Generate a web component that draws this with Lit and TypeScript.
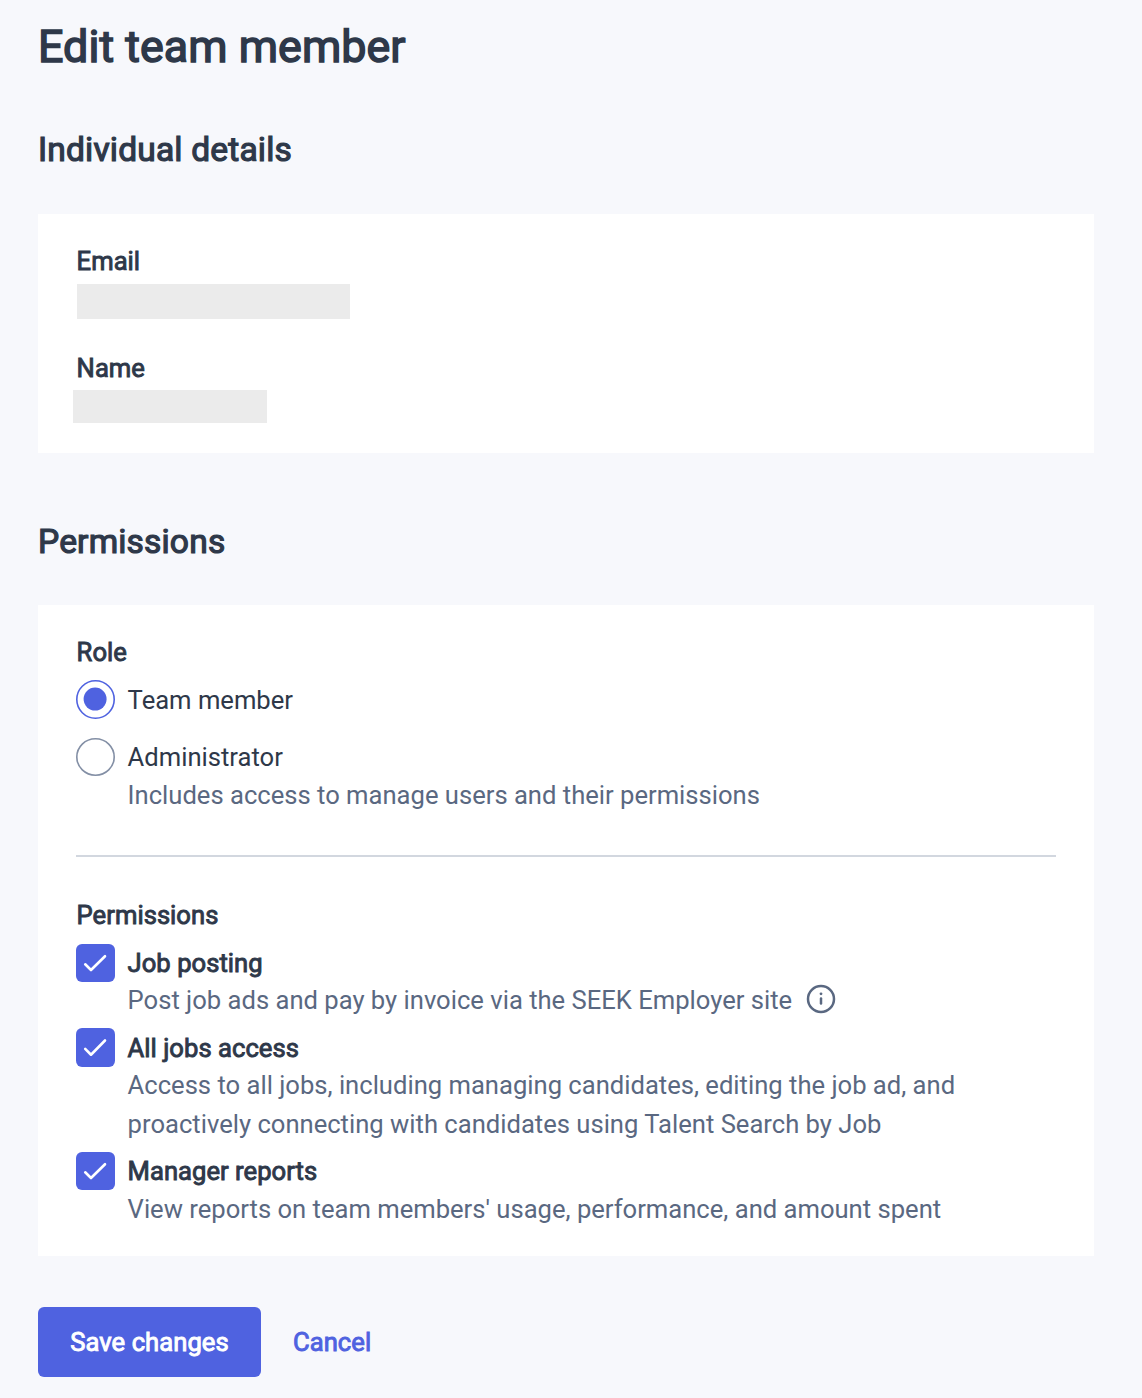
import { LitElement, html, css, nothing, svg } from "lit";
import { customElement } from "lit/decorators.js";

interface Permission { title: string; lines: string[]; info?: boolean }

const permissions: Permission[] = [
  { title: "Job posting", lines: ["Post job ads and pay by invoice via the SEEK Employer site"], info: true },
  { title: "All jobs access", lines: ["Access to all jobs, including managing candidates, editing the job ad, and", "proactively connecting with candidates using Talent Search by Job"] },
  { title: "Manager reports", lines: ["View reports on team members' usage, performance, and amount spent"] },
];

@customElement("app-root")
class AppRoot extends LitElement {
  static styles = css`
    :host { display: block; box-sizing: border-box; width: 1142px; height: 1398px; overflow: hidden; background: #f7f8fc; color: #2e3849; font-family: Roboto, sans-serif; font-size: 25.6px; line-height: 38px; padding: 18px 48px 0 38px; }
    * { box-sizing: border-box; }
    h1, h2, h3, p { margin: 0; white-space: nowrap; }
    h1, h2, h3 { font-weight: 400; }
    h1 { font-size: 44.8px; line-height: 58px; letter-spacing: 0.06px; -webkit-text-stroke: 1.5px currentColor; }
    h2 { font-size: 33.6px; line-height: 44px; letter-spacing: 0.16px; -webkit-text-stroke: 1.2px currentColor; }
    h3 { font-size: 25.6px; line-height: 38px; letter-spacing: 0.03px; -webkit-text-stroke: 0.9px currentColor; }
    .card > h3 { padding-left: 0.6px; }
    .details-title { margin-top: 52px; }
    .card { background: #fff; padding: 28px 38px 0; }
    .details { margin-top: 42px; height: 239px; }
    .mask { background: #ebebeb; }
    .email { width: 273px; height: 35px; margin: 4px 0 30px 1px; }
    .name { width: 194px; height: 33px; margin: 3px 0 0 -3px; }
    .perm-title { margin-top: 67px; }
    .perms { margin-top: 41px; height: 651px; }
    .row { display: flex; gap: 12.6px; }
    .body { flex: 1; }
    .sub { color: #5a6881; display: flex; align-items: center; }
    .radio { width: 39px; height: 39px; flex: none; display: block; }
    .box { width: 39px; height: 38px; flex: none; display: block; }
    .roles { display: flex; flex-direction: column; gap: 18px; margin-top: 9px; }
    .roles .row:first-child p { padding-top: 1px; }
    .roles .row + .row { margin-top: 1px; }
    .roles .row:first-child { height: 39px; }
    .divider { height: 2px; background: #d2d7df; margin: 41px 0 39px; }
    .list { display: flex; flex-direction: column; margin-top: 10px; }
    .list .row:nth-child(1) { height: 84px; }
    .list .row:nth-child(1) h3 { height: 37px; }
    .list .row:nth-child(2) { height: 124px; }
    .list .row:nth-child(2) .box { height: 39px; }
    .list .row:nth-child(2) h3 { height: 38px; padding-top: 1px; }
    .list .row:nth-child(2) .sub + .sub { margin-top: 1px; }
    .info { width: 30px; height: 30px; margin: -2px 0 0 13.6px; }
    .actions { display: flex; align-items: center; gap: 32px; margin-top: 51px; }
    button { font: inherit; letter-spacing: 0.05px; -webkit-text-stroke: 0.9px currentColor; border: 0; padding: 0; background: none; color: #4f62e0; }
    .save { width: 223px; height: 70px; border-radius: 6px; background: #4f62e0; color: #fff; }
  `;
  render() {
    return html`
      <h1>Edit team member</h1>
      <h2 class="details-title">Individual details</h2>
      <section class="card details">
        <h3>Email</h3><div class="mask email"></div>
        <h3>Name</h3><div class="mask name"></div>
      </section>
      <h2 class="perm-title">Permissions</h2>
      <section class="card perms">
        <h3>Role</h3>
        <div class="roles">
          <div class="row">${this.radio(true)}<p>Team member</p></div>
          <div class="row">${this.radio(false)}<div><p>Administrator</p><p class="sub">Includes access to manage users and their permissions</p></div></div>
        </div>
        <div class="divider"></div>
        <h3>Permissions</h3>
        <div class="list">${permissions.map((p) => html`
          <div class="row">
            <svg class="box" viewBox="0 0 39 38" preserveAspectRatio="none"><rect width="39" height="38" rx="6" fill="#4f62e0"/><path d="M9.2 20.3L15 26L29 12.2" fill="none" stroke="#fff" stroke-width="2.6" stroke-linecap="round" stroke-linejoin="round"/></svg>
            <div class="body"><h3>${p.title}</h3>${p.lines.map((l) => html`<p class="sub">${l}${p.info ? this.info() : nothing}</p>`)}</div>
          </div>`)}</div>
      </section>
      <div class="actions"><button class="save">Save changes</button><button>Cancel</button></div>`;
  }
  private radio(on: boolean) {
    return html`<svg class="radio" viewBox="0 0 39 39"><ellipse cx="19.5" cy=${on ? 19.5 : 19} rx="18.7" ry=${on ? 18.7 : 18.2} fill="#fff" stroke=${on ? "#4f62e0" : "#838fa5"} stroke-width="1.6"/>${on ? svg`<circle cx="19.1" cy="19.1" r="11.5" fill="#4f62e0"/>` : nothing}</svg>`;
  }
  private info() {
    return html`<svg class="info" viewBox="0 0 30 30" fill="none" stroke="#5a6881" stroke-width="2.5" stroke-linecap="round"><circle cx="15" cy="15" r="13"/><path d="M15 14.5v5"/><circle cx="15" cy="9.8" r="1.4" fill="#5a6881" stroke="none"/></svg>`;
  }
}
